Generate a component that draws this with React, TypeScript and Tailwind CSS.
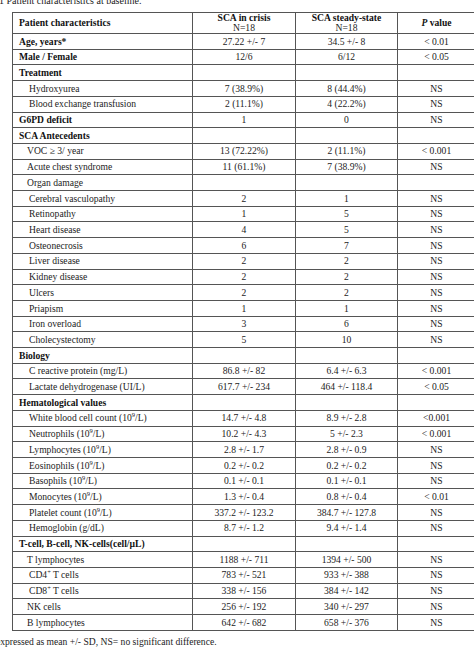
import React from "react";

type Row = {
  label: React.ReactNode;
  kind: "bold" | "a" | "b";
  v?: [string, string, string];
};

const sup = (s: string) => (
  <span className="text-[6.5px] inline-block align-top -mt-[1px] leading-none">{s}</span>
);
const tenNine = (name: string, unit = "/L)") => (
  <>
    {name} (10{sup("9")}
    {unit}
  </>
);

const rows: Row[] = [
  { label: "Age, years*", kind: "bold", v: ["27.22 +/- 7", "34.5 +/- 8", "< 0.01"] },
  { label: "Male / Female", kind: "bold", v: ["12/6", "6/12", "< 0.05"] },
  { label: "Treatment", kind: "bold" },
  { label: "Hydroxyurea", kind: "a", v: ["7 (38.9%)", "8 (44.4%)", "NS"] },
  { label: "Blood exchange transfusion", kind: "a", v: ["2 (11.1%)", "4 (22.2%)", "NS"] },
  { label: "G6PD deficit", kind: "bold", v: ["1", "0", "NS"] },
  { label: "SCA Antecedents", kind: "bold" },
  { label: "VOC ≥ 3/ year", kind: "b", v: ["13 (72.22%)", "2 (11.1%)", "< 0.001"] },
  { label: "Acute chest syndrome", kind: "b", v: ["11 (61.1%)", "7 (38.9%)", "NS"] },
  { label: "Organ damage", kind: "b" },
  { label: "Cerebral vasculopathy", kind: "a", v: ["2", "1", "NS"] },
  { label: "Retinopathy", kind: "a", v: ["1", "5", "NS"] },
  { label: "Heart disease", kind: "a", v: ["4", "5", "NS"] },
  { label: "Osteonecrosis", kind: "a", v: ["6", "7", "NS"] },
  { label: "Liver disease", kind: "a", v: ["2", "2", "NS"] },
  { label: "Kidney disease", kind: "a", v: ["2", "2", "NS"] },
  { label: "Ulcers", kind: "a", v: ["2", "2", "NS"] },
  { label: "Priapism", kind: "a", v: ["1", "1", "NS"] },
  { label: "Iron overload", kind: "a", v: ["3", "6", "NS"] },
  { label: "Cholecystectomy", kind: "a", v: ["5", "10", "NS"] },
  { label: "Biology", kind: "bold" },
  { label: "C reactive protein (mg/L)", kind: "a", v: ["86.8 +/- 82", "6.4 +/- 6.3", "< 0.001"] },
  { label: "Lactate dehydrogenase (UI/L)", kind: "a", v: ["617.7 +/- 234", "464 +/- 118.4", "< 0.05"] },
  { label: "Hematological values", kind: "bold" },
  { label: tenNine("White blood cell count"), kind: "a", v: ["14.7 +/- 4.8", "8.9 +/- 2.8", "<0.001"] },
  { label: tenNine("Neutrophils"), kind: "a", v: ["10.2 +/- 4.3", "5 +/- 2.3", "< 0.001"] },
  { label: tenNine("Lymphocytes"), kind: "a", v: ["2.8 +/- 1.7", "2.8 +/- 0.9", "NS"] },
  { label: tenNine("Eosinophils"), kind: "a", v: ["0.2 +/- 0.2", "0.2 +/- 0.2", "NS"] },
  { label: tenNine("Basophils"), kind: "a", v: ["0.1 +/- 0.1", "0.1 +/- 0.1", "NS"] },
  { label: tenNine("Monocytes"), kind: "a", v: ["1.3 +/- 0.4", "0.8 +/- 0.4", "< 0.01"] },
  { label: tenNine("Platelet count"), kind: "a", v: ["337.2 +/- 123.2", "384.7 +/- 127.8", "NS"] },
  { label: "Hemoglobin (g/dL)", kind: "a", v: ["8.7 +/- 1.2", "9.4 +/- 1.4", "NS"] },
  { label: "T-cell, B-cell, NK-cells(cell/µL)", kind: "bold" },
  { label: "T lymphocytes", kind: "b", v: ["1188 +/- 711", "1394 +/- 500", "NS"] },
  { label: <>CD4{sup("+")} T cells</>, kind: "a", v: ["783 +/- 521", "933 +/- 388", "NS"] },
  { label: <>CD8{sup("+")} T cells</>, kind: "a", v: ["338 +/- 156", "384 +/- 142", "NS"] },
  { label: "NK cells", kind: "b", v: ["256 +/- 192", "340 +/- 297", "NS"] },
  { label: "B lymphocytes", kind: "b", v: ["642 +/- 682", "658 +/- 376", "NS"] },
];

const cell = "border-b border-r border-[#555] h-[15.71px] flex items-center leading-none whitespace-nowrap";

export default function App() {
  return (
    <div
      className="w-[474px] h-[648px] overflow-hidden bg-white text-[#1c1c1c] text-[9.6px]"
      style={{ fontFamily: '"Liberation Serif", "Times New Roman", serif' }}
    >
      <div className="-mt-[5px] mb-[5px] h-[12px] leading-[12px] text-[10px] whitespace-nowrap -ml-[1px]">
        1 Patient characteristics at baseline.
      </div>
      <div className="ml-[12px] w-[463px] border-t border-l border-[#555] grid grid-cols-[180px_103px_102px_78px]">
        <div className="border-b border-r border-[#555] h-[21px] flex items-center pl-[6px] font-bold text-[#111]">
          Patient characteristics
        </div>
        <div className="border-b border-r border-[#555] h-[21px] flex flex-col items-center justify-center leading-[10px]">
          <span className="font-bold text-[#111]">SCA in crisis</span>
          <span>N=18</span>
        </div>
        <div className="border-b border-r border-[#555] h-[21px] flex flex-col items-center justify-center leading-[10px]">
          <span className="font-bold text-[#111]">SCA steady-state</span>
          <span>N=18</span>
        </div>
        <div className="border-b border-r border-[#555] h-[21px] flex items-center justify-center font-bold text-[#111]">
          <span>
            <i>P</i> value
          </span>
        </div>
        {rows.map((r, i) => (
          <React.Fragment key={i}>
            <div
              className={
                cell +
                (r.kind === "bold"
                  ? " pl-[6px] font-bold text-[#111]"
                  : r.kind === "a"
                  ? " pl-[16px]"
                  : " pl-[14px]")
              }
            >
              <span>{r.label}</span>
            </div>
            <div className={cell + " justify-center"}>{r.v ? r.v[0] : ""}</div>
            <div className={cell + " justify-center"}>{r.v ? r.v[1] : ""}</div>
            <div className={cell + " justify-center"}>{r.v ? r.v[2] : ""}</div>
          </React.Fragment>
        ))}
      </div>
      <div className="mt-[5px] h-[12px] leading-[12px] text-[9.6px] whitespace-nowrap -ml-[4px]">
        expressed as mean +/- SD, NS= no significant difference.
      </div>
    </div>
  );
}
